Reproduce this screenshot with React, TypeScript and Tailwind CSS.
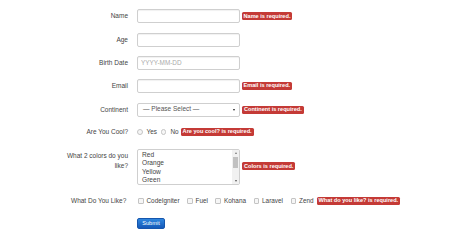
import React from 'react';

const FONT = { fontFamily: '"Liberation Sans", Arial, Helvetica, sans-serif' };

function Badge({ children, className = '' }: { children: React.ReactNode; className?: string }) {
  return (
    <span className={`flex h-[8px] items-center whitespace-nowrap rounded-[1.5px] bg-[#c43a36] px-[2px] text-[5.6px] font-bold leading-none text-white ${className}`}>
      {children}
    </span>
  );
}

function Row({ label, children, className = '' }: { label: React.ReactNode; children: React.ReactNode; className?: string }) {
  return (
    <div className={`flex items-center ${className}`}>
      <div className="w-[68px] shrink-0 text-right text-[6.5px] leading-[10px] text-[#444]">{label}</div>
      <div className="ml-[9px] flex items-center">{children}</div>
    </div>
  );
}

const inputCls =
  'block h-[14px] w-[103px] rounded-[2px] border border-[#cfcfcf] bg-white px-[3px] text-[6.4px] leading-none text-[#555] shadow-[inset_0_1px_1px_rgba(0,0,0,0.06)] outline-none placeholder:text-[#aaa]';

function Radio({ label }: { label: string }) {
  return (
    <span className="flex items-center">
      <span className="h-[5.5px] w-[5.5px] rounded-full border border-[#c4c4c4] bg-[#f6f6f6]" />
      <span className="ml-[4px] text-[6.4px] text-[#444]">{label}</span>
    </span>
  );
}

function Check({ label }: { label: string }) {
  return (
    <span className="flex items-center">
      <span className="h-[5.5px] w-[5.5px] rounded-[1px] border border-[#c4c4c4] bg-[#f6f6f6]" />
      <span className="ml-[3px] text-[6.4px] text-[#444]">{label}</span>
    </span>
  );
}

export default function App() {
  return (
    <div className="h-[237px] w-[474px] overflow-hidden bg-white text-[6.5px] leading-none" style={FONT}>
      <div className="flex flex-col pl-[60px] pt-[9.3px]">
        <div className="flex flex-col gap-[9.33px]">
          <Row label="Name">
            <input className={inputCls} readOnly />
            <Badge className="ml-[1.5px]">Name is required.</Badge>
          </Row>
          <Row label="Age">
            <input className={inputCls} readOnly />
          </Row>
          <Row label="Birth Date">
            <input className={inputCls} placeholder="YYYY-MM-DD" readOnly />
          </Row>
          <Row label="Email">
            <input className={inputCls} readOnly />
            <Badge className="ml-[1.5px]">Email is required.</Badge>
          </Row>
          <Row label="Continent">
            <div className="flex h-[14px] w-[103px] items-center justify-between rounded-[2px] border border-[#cfcfcf] bg-white pl-[5px] pr-[4px] text-[6.5px] text-[#555]">
              <span>— Please Select —</span>
              <span className="h-0 w-0 border-x-[1.5px] border-t-[2.5px] border-x-transparent border-t-[#222]" />
            </div>
            <Badge className="ml-[2px]">Continent is required.</Badge>
          </Row>
        </div>

        <Row label="Are You Cool?" className="mt-[10.3px] h-[10px]">
          <Radio label="Yes" />
          <span className="ml-[4px] flex"><Radio label="No" /></span>
          <Badge className="ml-[2px]">Are you cool? is required.</Badge>
        </Row>

        <div className="mt-[12px] flex items-start">
          <div className="w-[68px] shrink-0 pt-[2.5px] text-right text-[6.5px] leading-[10px] text-[#444]">
            What 2 colors do you like?
          </div>
          <div className="ml-[9px] flex items-center">
            <div className="flex h-[36px] w-[103px] overflow-hidden rounded-[2px] border border-[#cfcfcf] bg-white">
              <div className="flex-1 pl-[4px] pt-[1px] text-[6.6px] leading-[8.3px] text-[#444]">
                <div>Red</div>
                <div>Orange</div>
                <div>Yellow</div>
                <div>Green</div>
              </div>
              <div className="flex w-[7px] flex-col items-center bg-[#f1f1f1] py-[1px]">
                <span className="mt-[1px] h-0 w-0 border-x-[1.5px] border-b-[2px] border-x-transparent border-b-[#777]" />
                <span className="mt-[3px] h-[11px] w-[5px] bg-[#c1c1c1]" />
                <span className="mt-auto mb-[1px] h-0 w-0 border-x-[1.5px] border-t-[2px] border-x-transparent border-t-[#555]" />
              </div>
            </div>
            <Badge className="ml-[2px] -mt-[1px]">Colors is required.</Badge>
          </div>
        </div>

        <div className="mt-[11px] flex h-[10px] items-center">
          <div className="ml-[11px] w-[63px] shrink-0 whitespace-nowrap text-[6.5px] leading-[10px] text-[#444]">What Do You Like?</div>
          <div className="ml-[4px] flex items-center gap-[7.5px]">
            <Check label="CodeIgniter" />
            <Check label="Fuel" />
            <Check label="Kohana" />
            <Check label="Laravel" />
            <span className="flex items-center">
              <Check label="Zend" />
              <Badge className="ml-[3px]">What do you like? is required.</Badge>
            </span>
          </div>
        </div>

        <div className="mt-[12px] flex pl-[77px]">
          <button className="flex h-[11px] w-[28px] items-center justify-center rounded-[2px] border border-[#1656ad] bg-gradient-to-b from-[#2f86de] to-[#1559b8] text-[5.6px] leading-none text-white">
            Submit
          </button>
        </div>
      </div>
    </div>
  );
}
